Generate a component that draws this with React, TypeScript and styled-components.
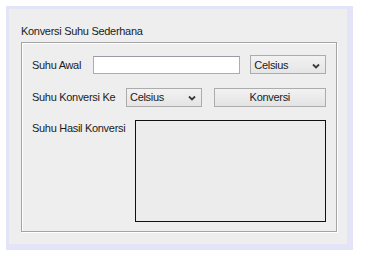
import React, { FC } from 'react';
import styled, { createGlobalStyle } from 'styled-components';

const GlobalStyle = createGlobalStyle`
  html, body {
    margin: 0;
    padding: 0;
    background: #fff;
  }
  body {
    font-family: "Liberation Sans", Arial, sans-serif;
    font-size: 11px;
    color: #1b1b1b;
  }
`;

const Page = styled.div`
  padding: 6px 0 0 6px;
`;

const Frame = styled.div`
  width: 338px;
  height: 235px;
  border-style: solid;
  border-color: #e4e4f8;
  border-width: 3px 6px 6px 3px;
  background: #eeeeee;
  display: flex;
  flex-direction: column;
`;

const Title = styled.div`
  padding: 16px 0 0 12px;
  height: 17px;
  line-height: 13px;
  letter-spacing: -0.3px;
`;

const GroupBox = styled.div`
  margin-left: 12px;
  width: 316px;
  height: 190px;
  border: 1px solid #a4a4a4;
  box-shadow: 1px 1px 0 #fff, inset 1px 1px 0 #fff;
  padding: 12px 10px 0 10px;
  box-sizing: border-box;
  display: flex;
  flex-direction: column;
  gap: 13px;
`;

const Row = styled.div<{ $h: number }>`
  display: flex;
  align-items: center;
  height: ${(p) => p.$h}px;
`;

const TopRow = styled.div`
  display: flex;
  align-items: flex-start;
`;

const Label = styled.span<{ $w: number; $mt?: number }>`
  width: ${(p) => p.$w}px;
  margin-top: ${(p) => p.$mt ?? 0}px;
  flex-shrink: 0;
  white-space: nowrap;
  letter-spacing: -0.3px;
`;

const TextInput = styled.div`
  width: 148px;
  height: 18px;
  box-sizing: border-box;
  background: #fff;
  border: 1px solid #abadb3;
  border-top-color: #9a9ca3;
`;

const SelectBox = styled.div<{ $ml?: number }>`
  width: 76px;
  height: 19px;
  margin-left: ${(p) => p.$ml ?? 0}px;
  box-sizing: border-box;
  border: 1px solid #acacac;
  background: linear-gradient(#f2f2f2, #e5e5e5);
  display: flex;
  align-items: center;
  justify-content: space-between;
  padding: 0 5px 0 3px;
  letter-spacing: -0.3px;
`;

const Chevron = styled.svg`
  width: 8px;
  height: 6px;
  margin-top: 2px;
`;

const Button = styled.div`
  width: 113px;
  height: 19px;
  margin-left: 12px;
  box-sizing: border-box;
  border: 1px solid #acacac;
  background: linear-gradient(#f2f2f2, #e3e3e3);
  display: flex;
  align-items: center;
  justify-content: center;
  letter-spacing: -0.3px;
`;

const ResultArea = styled.div`
  width: 193px;
  height: 102px;
  box-sizing: border-box;
  border: 1px solid #111;
  background: #ececec;
`;

const Select: FC<{ value: string; ml?: number }> = ({ value, ml }) => (
  <SelectBox $ml={ml}>
    <span>{value}</span>
    <Chevron viewBox="0 0 8 6">
      <path d="M1 1.5 L4 4.5 L7 1.5" fill="none" stroke="#3a3a3a" strokeWidth="1.8" />
    </Chevron>
  </SelectBox>
);

const App: FC = () => {
  return (
    <Page>
      <GlobalStyle />
      <Frame>
        <Title>Konversi Suhu Sederhana</Title>
        <GroupBox>
          <Row $h={19}>
            <Label $w={61}>Suhu Awal</Label>
            <TextInput />
            <Select value="Celsius" ml={10} />
          </Row>
          <Row $h={20}>
            <Label $w={94}>Suhu Konversi Ke</Label>
            <Select value="Celsius" />
            <Button>Konversi</Button>
          </Row>
          <TopRow>
            <Label $w={103} $mt={2}>Suhu Hasil Konversi</Label>
            <ResultArea />
          </TopRow>
        </GroupBox>
      </Frame>
    </Page>
  );
};

export default App;
